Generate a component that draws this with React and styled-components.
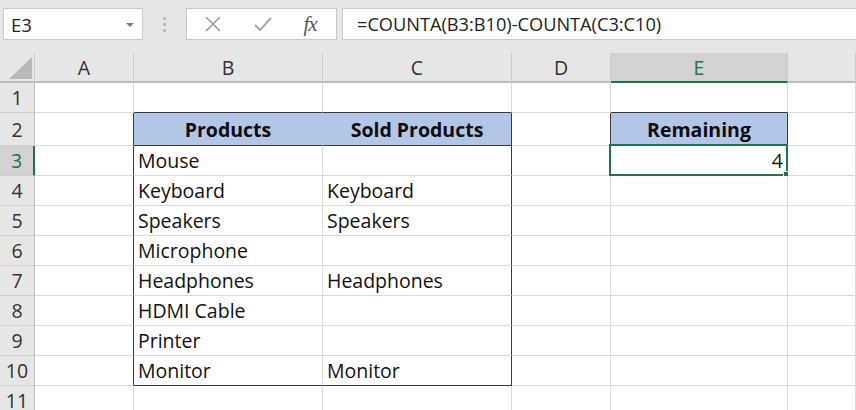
import React from "react";
import styled, { createGlobalStyle, css } from "styled-components";

const GlobalStyle = createGlobalStyle`
  html, body {
    margin: 0;
    padding: 0;
    background: #ffffff;
    overflow: hidden;
  }
  body {
    font-family: "Open Sans", "Liberation Sans", sans-serif;
  }
`;

const GRID = "#dadada";
const DARK = "#3a3a3a";
const GREEN = "#217346";
const FILL = "#b4c6e7";

const Page = styled.div`
  width: 856px;
  height: 410px;
  overflow: hidden;
  display: flex;
  flex-direction: column;
`;

const FormulaBar = styled.div`
  height: 53px;
  flex: none;
  background: #e6e6e6;
  box-sizing: border-box;
  padding: 8px 0 0 3px;
  display: flex;
  align-items: flex-start;
`;

const NameBox = styled.div`
  width: 140px;
  height: 32px;
  box-sizing: border-box;
  background: #fff;
  border: 1px solid #c8c8c8;
  display: flex;
  align-items: center;
  justify-content: space-between;
  padding: 0 8px 0 7px;
  font-size: 18.5px;
  color: #222;
`;

const Caret = styled.span`
  width: 0;
  height: 0;
  border-left: 4px solid transparent;
  border-right: 4px solid transparent;
  border-top: 4px solid #7a7a7a;
  margin-top: 2px;
`;

const Grip = styled.div`
  width: 43px;
  height: 32px;
  display: flex;
  flex-direction: column;
  align-items: center;
  justify-content: center;
  gap: 3px;
  span {
    width: 3px;
    height: 3px;
    border-radius: 50%;
    background: #b0b0b0;
  }
`;

const ButtonGroup = styled.div`
  width: 151px;
  height: 32px;
  box-sizing: border-box;
  background: #fff;
  border: 1px solid #c8c8c8;
  display: flex;
  align-items: center;
  justify-content: space-around;
  padding: 0 4px 0 2px;
`;

const Fx = styled.span`
  font-family: "Liberation Serif", "DejaVu Serif", serif;
  font-style: italic;
  font-size: 21px;
  color: #555;
  letter-spacing: -1px;
`;

const FormulaInput = styled.div`
  flex: 1;
  margin-left: 5px;
  height: 32px;
  box-sizing: border-box;
  background: #fff;
  border: 1px solid #c8c8c8;
  border-right: none;
  display: flex;
  align-items: center;
  padding-left: 14px;
  font-size: 18.2px;
  color: #222;
`;

const Sheet = styled.div`
  flex: 1;
  display: grid;
  grid-template-columns: 35px 99px 189px 189px 99px 177px 1fr;
  grid-template-rows: 30px 30px 33px repeat(9, 30px);
`;

const ColHead = styled.div`
  box-sizing: border-box;
  background: ${({ $active }) => ($active ? "#d2d2d2" : "#e6e6e6")};
  color: ${({ $active }) => ($active ? GREEN : "#333")};
  border-right: 1px solid #cdcdcd;
  border-bottom: 2px solid ${({ $active }) => ($active ? GREEN : "#bdbdbd")};
  display: flex;
  align-items: center;
  justify-content: center;
  font-size: 19.5px;
  position: relative;
`;

const Corner = styled(ColHead)`
  svg {
    position: absolute;
    right: 2px;
    bottom: 2px;
  }
`;

const RowHead = styled.div`
  box-sizing: border-box;
  background: ${({ $active }) => ($active ? "#d2d2d2" : "#e6e6e6")};
  color: ${({ $active }) => ($active ? GREEN : "#333")};
  border-right: ${({ $active }) => ($active ? `2px solid ${GREEN}` : "1px solid #bdbdbd")};
  border-bottom: 1px solid #d0d0d0;
  display: flex;
  align-items: center;
  justify-content: center;
  font-size: 19.5px;
`;

const Cell = styled.div`
  box-sizing: border-box;
  background: ${({ $fill }) => $fill || "#fff"};
  border-right: 1px solid ${({ $right }) => $right};
  border-bottom: 1px solid ${({ $bottom }) => $bottom};
  display: flex;
  align-items: center;
  justify-content: ${({ $align }) =>
    $align === "center" ? "center" : $align === "right" ? "flex-end" : "flex-start"};
  padding: 0 4px;
  font-size: 19.5px;
  color: #111;
  white-space: nowrap;
  position: relative;
  ${({ $bold }) =>
    $bold &&
    css`
      font-weight: 700;
      color: #0d0d0d;
    `}
`;

const Selection = styled.div`
  position: absolute;
  left: -2px;
  top: -2px;
  right: -1px;
  bottom: -1px;
  border: 2px solid ${GREEN};
  pointer-events: none;
  &::after {
    content: "";
    position: absolute;
    right: -5px;
    bottom: -5px;
    width: 6px;
    height: 6px;
    background: ${GREEN};
    border: 1px solid #fff;
  }
`;

const COLS = ["A", "B", "C", "D", "E", "F"];

const data = {
  "B2": { text: "Products", bold: true, align: "center" },
  "C2": { text: "Sold Products", bold: true, align: "center" },
  "E2": { text: "Remaining", bold: true, align: "center" },
  "B3": { text: "Mouse" },
  "E3": { text: "4", align: "right" },
  "B4": { text: "Keyboard" },
  "C4": { text: "Keyboard" },
  "B5": { text: "Speakers" },
  "C5": { text: "Speakers" },
  "B6": { text: "Microphone" },
  "B7": { text: "Headphones" },
  "C7": { text: "Headphones" },
  "B8": { text: "HDMI Cable" },
  "B9": { text: "Printer" },
  "B10": { text: "Monitor" },
  "C10": { text: "Monitor" },
};

const filled = new Set(["B2", "C2", "E2"]);

// boxes with dark outlines: [r1, r2, c1, c2] (c as index into COLS)
const boxes = [
  [2, 10, 1, 2],
  [2, 2, 1, 2],
  [2, 2, 4, 4],
];

const inRange = (v, a, b) => v >= a && v <= b;

function rightEdge(r, c) {
  return boxes.some(
    ([r1, r2, c1, c2]) => inRange(r, r1, r2) && (c === c2 || c + 1 === c1)
  );
}

function bottomEdge(r, c) {
  return boxes.some(
    ([r1, r2, c1, c2]) => inRange(c, c1, c2) && (r === r2 || r + 1 === r1)
  );
}

function cellProps(r, c) {
  const key = COLS[c] + r;
  const fill = filled.has(key) ? FILL : null;
  let right = GRID;
  if (rightEdge(r, c)) right = DARK;
  else if (fill && filled.has(COLS[c + 1] + r)) right = FILL;
  const bottom = bottomEdge(r, c) ? DARK : GRID;
  return { key, fill, right, bottom };
}

function App() {
  const rows = Array.from({ length: 11 }, (_, i) => i + 1);

  return (
    <Page>
      <GlobalStyle />
      <FormulaBar>
        <NameBox>
          E3
          <Caret />
        </NameBox>
        <Grip>
          <span />
          <span />
          <span />
        </Grip>
        <ButtonGroup>
          <svg width="18" height="18" viewBox="0 0 18 18">
            <path d="M2 2 L16 16 M16 2 L2 16" stroke="#9c9c9c" strokeWidth="1.6" fill="none" />
          </svg>
          <svg width="20" height="18" viewBox="0 0 20 18">
            <path d="M2 10 L7 15 L18 3" stroke="#a8a8a8" strokeWidth="2" fill="none" />
          </svg>
          <Fx>fx</Fx>
        </ButtonGroup>
        <FormulaInput>=COUNTA(B3:B10)-COUNTA(C3:C10)</FormulaInput>
      </FormulaBar>

      <Sheet>
        <Corner>
          <svg width="23" height="22" viewBox="0 0 23 22">
            <polygon points="23,0 23,22 0,22" fill="#b9b9b9" />
          </svg>
        </Corner>
        {COLS.map((c) => (
          <ColHead key={c} $active={c === "E"}>
            {c === "F" ? "" : c}
          </ColHead>
        ))}

        {rows.map((r) => (
          <React.Fragment key={r}>
            <RowHead $active={r === 3}>{r}</RowHead>
            {COLS.map((_, c) => {
              const { key, fill, right, bottom } = cellProps(r, c);
              const d = data[key] || {};
              return (
                <Cell
                  key={key}
                  $fill={fill}
                  $right={right}
                  $bottom={bottom}
                  $bold={d.bold}
                  $align={d.align}
                >
                  {d.text}
                  {key === "E3" && <Selection />}
                </Cell>
              );
            })}
          </React.Fragment>
        ))}
      </Sheet>
    </Page>
  );
}

export default App;
